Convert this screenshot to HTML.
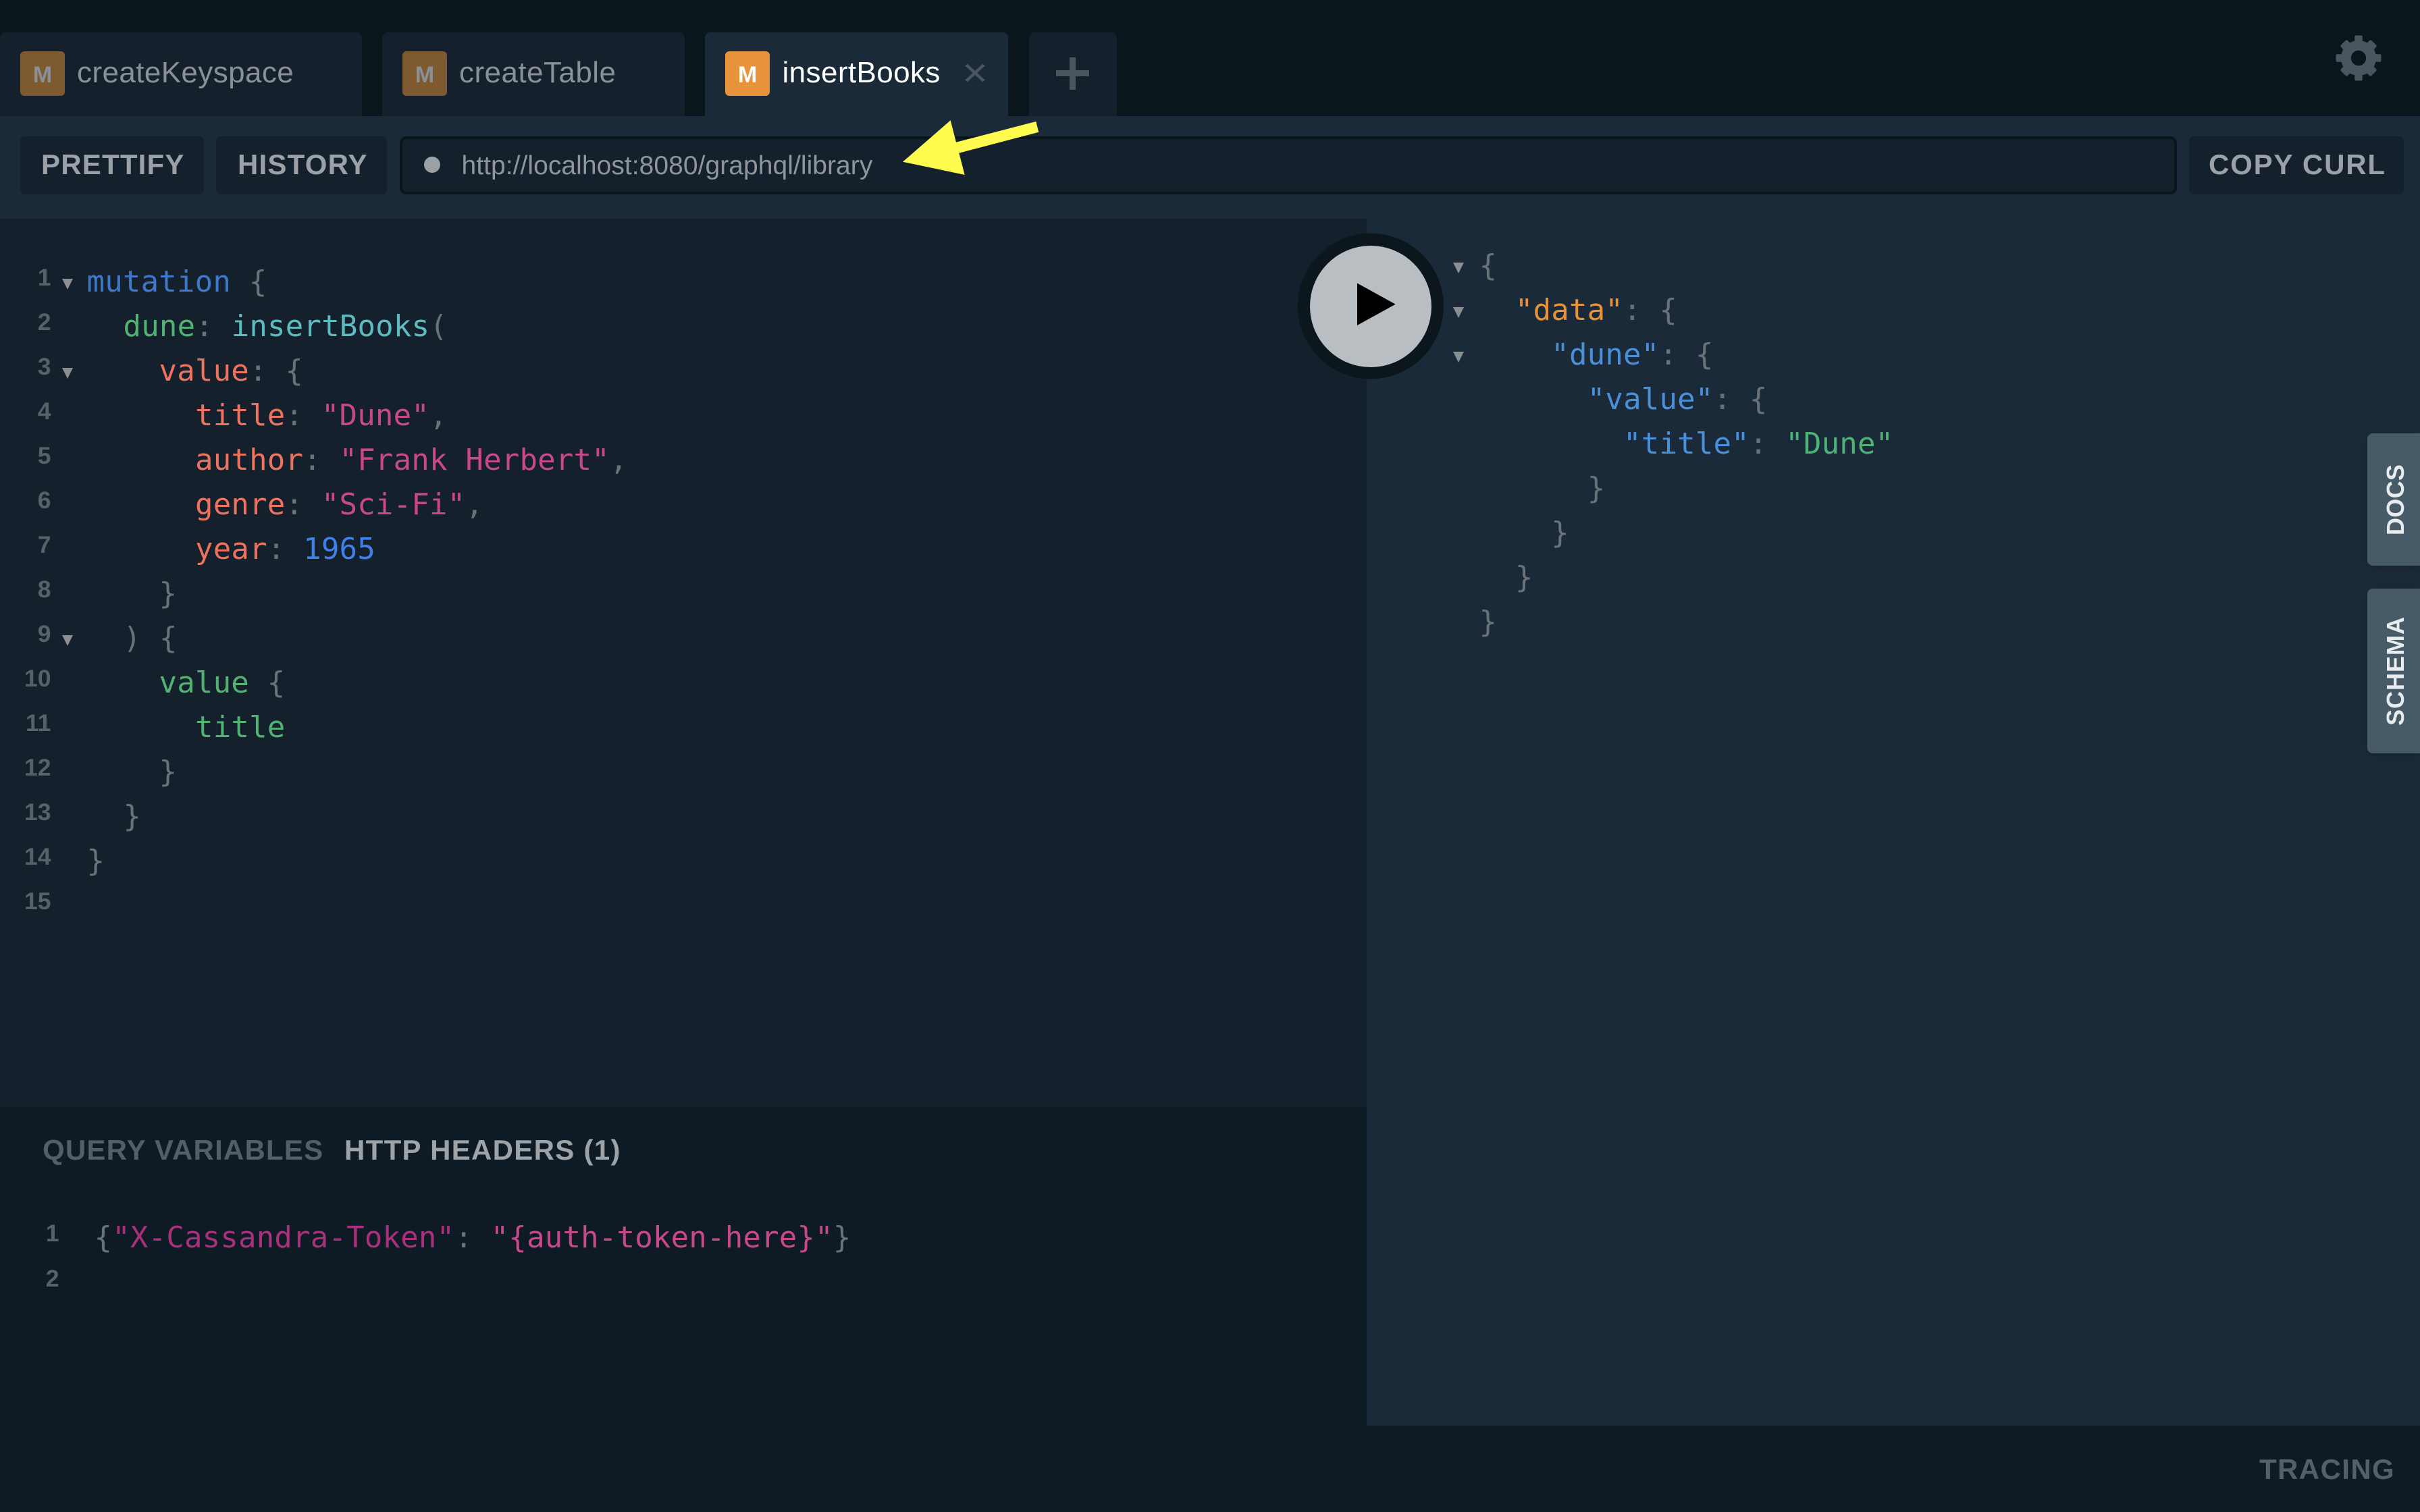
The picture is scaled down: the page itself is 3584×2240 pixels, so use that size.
<!DOCTYPE html>
<html lang="en">
<head>
<meta charset="utf-8">
<title>GraphQL Playground</title>
<style>
html,body{margin:0;padding:0;background:#0f1b24;width:3584px;height:2240px;overflow:hidden}
svg{display:block}
text{white-space:pre}
.sans{font-family:"Liberation Sans",Arial,sans-serif}
.b{font-family:"Liberation Sans",Arial,sans-serif;font-weight:700}
.mono{font-family:"DejaVu Sans Mono","Liberation Mono",monospace;font-size:44px;letter-spacing:.2px}
.ln{font-family:"Liberation Sans",Arial,sans-serif;font-weight:700;font-size:35.5px;fill:#596069;text-anchor:end}
.p{fill:#6a7279}
.kw{fill:#3f78c8}
.al{fill:#52b272}
.fn{fill:#5dbcc0}
.ar{fill:#ee7260}
.st{fill:#c8488c}
.nu{fill:#3f80ea}
.rk{fill:#4a90d9}
.rs{fill:#4fb378}
.or{fill:#e8923a}
.fold{fill:#8c8f92}
</style>
</head>
<body>
<svg xmlns="http://www.w3.org/2000/svg" width="3584" height="2240" viewBox="0 0 3584 2240">
  <defs>
    <filter id="sh" x="-30%" y="-30%" width="160%" height="160%">
      <feDropShadow dx="0" dy="2" stdDeviation="8" flood-color="#000" flood-opacity=".18"/>
    </filter>
  </defs>

  <!-- backgrounds -->
  <rect width="3584" height="2240" fill="#0f1b24"/>
  <rect width="3584" height="172" fill="#0b161c"/>
  <rect y="172" width="3584" height="152" fill="#1b2a39"/>
  <rect y="324" width="2024" height="1316" fill="#14212c"/>
  <rect y="1640" width="2024" height="600" fill="#0f1b24"/>
  <rect x="2024" y="324" width="1560" height="1788" fill="#1b2a39"/>

  <!-- tabs -->
  <path d="M0 56a8 8 0 0 1 8-8H528a8 8 0 0 1 8 8V172H0Z" fill="#14212c"/>
  <path d="M566 56a8 8 0 0 1 8-8H1006a8 8 0 0 1 8 8V172H566Z" fill="#14212c"/>
  <path d="M1044 56a8 8 0 0 1 8-8H1485a8 8 0 0 1 8 8V172H1044Z" fill="#1b2a39"/>
  <path d="M1524 56a8 8 0 0 1 8-8H1646a8 8 0 0 1 8 8V172H1524Z" fill="#14212c"/>

  <rect x="30" y="76" width="66" height="66" rx="6" fill="#7d5a2f"/>
  <text class="b" x="63" y="122" font-size="34" text-anchor="middle" fill="#8a9097">M</text>
  <text class="sans" x="114" y="122" font-size="44" letter-spacing=".4" fill="#8a9097">createKeyspace</text>

  <rect x="596" y="76" width="66" height="66" rx="6" fill="#7d5a2f"/>
  <text class="b" x="629" y="122" font-size="34" text-anchor="middle" fill="#8a9097">M</text>
  <text class="sans" x="680" y="122" font-size="44" letter-spacing=".45" fill="#8a9097">createTable</text>

  <rect x="1074" y="76" width="66" height="66" rx="6" fill="#e8923a"/>
  <text class="b" x="1107" y="122" font-size="34" text-anchor="middle" fill="#ffffff">M</text>
  <text class="sans" x="1158.500" y="122" font-size="44" letter-spacing=".4" fill="#ffffff">insertBooks</text>
  <path d="M1431 96L1457 120M1457 96L1431 120" stroke="#4a555d" stroke-width="4.500" fill="none"/>

  <path d="M1564 104H1584V85H1593V104H1613V113H1593V133H1584V113H1564Z" fill="#4a555d"/>

  <!-- gear -->
  <g transform="translate(3493 86)" fill="#4a555e">
    <rect x="-5.700" y="-33.500" width="11.400" height="67" rx="2"/>
    <rect x="-7" y="-32" width="14" height="64" rx="2.500" transform="rotate(45)"/>
    <rect x="-5.700" y="-33.500" width="11.400" height="67" rx="2" transform="rotate(90)"/>
    <rect x="-7" y="-32" width="14" height="64" rx="2.500" transform="rotate(135)"/>
    <circle r="26"/>
    <circle r="11.200" fill="#0b161c"/>
  </g>

  <!-- toolbar -->
  <rect x="30" y="202" width="272" height="86" rx="7" fill="#14212c"/>
  <text class="b" x="61" y="258" font-size="42" letter-spacing="1.200" fill="#9ba1a6">PRETTIFY</text>
  <rect x="320" y="202" width="253" height="86" rx="7" fill="#14212c"/>
  <text class="b" x="352" y="258" font-size="42" letter-spacing="1.200" fill="#9ba1a6">HISTORY</text>
  <rect x="594" y="204" width="2628" height="82" rx="8" fill="#14212c" stroke="#0b161c" stroke-width="4"/>
  <circle cx="640" cy="244" r="12" fill="#9aa0a5"/>
  <text class="sans" x="683.500" y="258" font-size="39" letter-spacing=".05" fill="#8f959b">http://localhost:8080/graphql/library</text>
  <rect x="3242" y="202" width="318" height="86" rx="7" fill="#14212c"/>
  <text class="b" x="3271" y="258" font-size="42" letter-spacing="1.800" fill="#9ba1a6">COPY CURL</text>

  <!-- yellow arrow -->
  <path d="M1337 239.700L1407.700 178.300L1416 210.700L1534.300 180L1538.300 195.700L1420.300 226.700L1428.700 259Z" fill="#fffb4f"/>

  <!-- gutter -->
  <text class="ln" x="75.500" y="423">1</text>
  <text class="ln" x="75.500" y="489">2</text>
  <text class="ln" x="75.500" y="555">3</text>
  <text class="ln" x="75.500" y="621">4</text>
  <text class="ln" x="75.500" y="687">5</text>
  <text class="ln" x="75.500" y="753">6</text>
  <text class="ln" x="75.500" y="819">7</text>
  <text class="ln" x="75.500" y="885">8</text>
  <text class="ln" x="75.500" y="951">9</text>
  <text class="ln" x="75.500" y="1017">10</text>
  <text class="ln" x="75.500" y="1083">11</text>
  <text class="ln" x="75.500" y="1149">12</text>
  <text class="ln" x="75.500" y="1215">13</text>
  <text class="ln" x="75.500" y="1281">14</text>
  <text class="ln" x="75.500" y="1347">15</text>
  <path class="fold" d="M92 413H108L100 429Z"/>
  <path class="fold" d="M92 545H108L100 561Z"/>
  <path class="fold" d="M92 941H108L100 957Z"/>

  <!-- editor code -->
  <text class="mono" x="128.500" y="432"><tspan class="kw">mutation</tspan><tspan class="p"> {</tspan></text>
  <text class="mono" x="182.500" y="498"><tspan class="al">dune</tspan><tspan class="p">: </tspan><tspan class="fn">insertBooks</tspan><tspan class="p">(</tspan></text>
  <text class="mono" x="235.500" y="564"><tspan class="ar">value</tspan><tspan class="p">: {</tspan></text>
  <text class="mono" x="289" y="630"><tspan class="ar">title</tspan><tspan class="p">: </tspan><tspan class="st">"Dune"</tspan><tspan class="p">,</tspan></text>
  <text class="mono" x="289" y="696"><tspan class="ar">author</tspan><tspan class="p">: </tspan><tspan class="st">"Frank Herbert"</tspan><tspan class="p">,</tspan></text>
  <text class="mono" x="289" y="762"><tspan class="ar">genre</tspan><tspan class="p">: </tspan><tspan class="st">"Sci-Fi"</tspan><tspan class="p">,</tspan></text>
  <text class="mono" x="289" y="828"><tspan class="ar">year</tspan><tspan class="p">: </tspan><tspan class="nu">1965</tspan></text>
  <text class="mono p" x="235.500" y="894">}</text>
  <text class="mono p" x="182.500" y="960">) {</text>
  <text class="mono" x="235.500" y="1026"><tspan class="al">value</tspan><tspan class="p"> {</tspan></text>
  <text class="mono al" x="289" y="1092">title</text>
  <text class="mono p" x="235.500" y="1158">}</text>
  <text class="mono p" x="182.500" y="1224">}</text>
  <text class="mono p" x="128.500" y="1290">}</text>

  <!-- query variables -->
  <text class="b" x="63" y="1718" font-size="42" letter-spacing="1.200" fill="#555e66">QUERY VARIABLES</text>
  <text class="b" x="510" y="1718" font-size="42" letter-spacing="1.300" fill="#9ea3a8">HTTP HEADERS (1)</text>
  <text class="ln" x="87.500" y="1839">1</text>
  <text class="ln" x="87.500" y="1906">2</text>
  <text class="mono" x="139.500" y="1848"><tspan class="p">{</tspan><tspan fill="#a8307c">"X-Cassandra-Token"</tspan><tspan class="p">: </tspan><tspan class="st">"{auth-token-here}"</tspan><tspan class="p">}</tspan></text>

  <!-- result -->
  <text class="mono p" x="2190.500" y="408">{</text>
  <text class="mono" x="2243.900" y="474"><tspan class="or">"data"</tspan><tspan class="p">: {</tspan></text>
  <text class="mono" x="2297.300" y="540"><tspan class="rk">"dune"</tspan><tspan class="p">: {</tspan></text>
  <text class="mono" x="2350.700" y="606"><tspan class="rk">"value"</tspan><tspan class="p">: {</tspan></text>
  <text class="mono" x="2404" y="672"><tspan class="rk">"title"</tspan><tspan class="p">: </tspan><tspan class="rs">"Dune"</tspan></text>
  <text class="mono p" x="2350.700" y="738">}</text>
  <text class="mono p" x="2297.300" y="804">}</text>
  <text class="mono p" x="2243.900" y="870">}</text>
  <text class="mono p" x="2190.500" y="936">}</text>
  <path class="fold" d="M2152 389H2168L2160 405Z"/>
  <path class="fold" d="M2152 455H2168L2160 471Z"/>
  <path class="fold" d="M2152 521H2168L2160 537Z"/>

  <!-- run button -->
  <circle cx="2030" cy="453.500" r="108" fill="#0c161d"/>
  <circle cx="2030" cy="454" r="90" fill="#b9bec2"/>
  <path d="M2010 419.500L2066.700 450.700L2010 482Z" fill="#000"/>

  <!-- side tabs -->
  <path d="M3584 642H3514a8 8 0 0 0-8 8V830a8 8 0 0 0 8 8H3584Z" fill="#465a68" filter="url(#sh)"/>
  <text class="b" transform="translate(3560 793) rotate(-90)" font-size="36" letter-spacing=".3" fill="#e8ecee">DOCS</text>
  <path d="M3584 872H3514a8 8 0 0 0-8 8V1108a8 8 0 0 0 8 8H3584Z" fill="#465a68" filter="url(#sh)"/>
  <text class="b" transform="translate(3560 1075) rotate(-90)" font-size="36" letter-spacing="1" fill="#e8ecee">SCHEMA</text>

  <!-- footer -->
  <text class="b" x="3346" y="2191" font-size="42" letter-spacing="1.400" fill="#565e66">TRACING</text>
</svg>
</body>
</html>
